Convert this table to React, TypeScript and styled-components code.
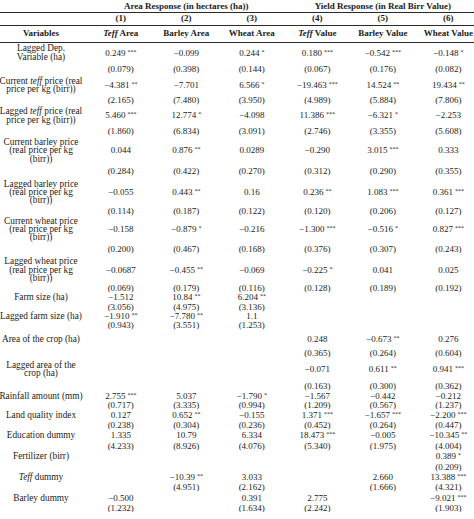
import * as React from 'react';
import styled, { createGlobalStyle } from 'styled-components';

const GlobalStyle = createGlobalStyle`
  html, body {
    margin: 0;
    padding: 0;
    background: #ffffff;
    overflow: hidden;
  }
`;

const LABEL_WIDTH = 94;
const DATA_WIDTH = 65.5;

const Page = styled.div`
  margin-left: -6px;
  width: ${LABEL_WIDTH + DATA_WIDTH * 6}px;
`;

const Table = styled.table`
  border-collapse: collapse;
  table-layout: fixed;
  width: 100%;
  font-family: 'Liberation Serif', 'Times New Roman', serif;
  font-size: 9px;
  line-height: 8.4px;
  color: #1b1b1b;
`;

const Row = styled.tr<{ $h: number; $rule?: boolean }>`
  height: ${(p) => p.$h}px;
  border-bottom: ${(p) => (p.$rule ? '1px solid #2a2a2a' : 'none')};
`;

const Cell = styled.td`
  padding: 0;
  text-align: center;
  vertical-align: middle;
  white-space: nowrap;
`;

const HeadCell = styled(Cell)`
  font-weight: bold;
`;

const LabelCell = styled(Cell)`
  font-size: 9.3px;
`;

const Em = styled.i`
  font-style: italic;
`;

const Stars = styled.sup`
  font-size: 6px;
  line-height: 0;
  vertical-align: 2px;
  margin-left: 2px;
`;

type Entry = {
  label: React.ReactNode;
  coef: string[];
  se: string[];
  h: [number, number];
};

const entries: Entry[] = [
  {
    label: (<>Lagged Dep.<br />Variable (ha)</>),
    coef: ['0.249 ***', '−0.099', '0.244 *', '0.180 ***', '−0.542 ***', '−0.148 *'],
    se: ['(0.079)', '(0.398)', '(0.144)', '(0.067)', '(0.176)', '(0.082)'],
    h: [21, 12],
  },
  {
    label: (<>Current <Em>teff</Em> price (real<br />price per kg (birr))</>),
    coef: ['−4.381 **', '−7.701', '6.566 *', '−19.463 ***', '14.524 **', '19.434 **'],
    se: ['(2.165)', '(7.480)', '(3.950)', '(4.989)', '(5.884)', '(7.806)'],
    h: [20, 11],
  },
  {
    label: (<>Lagged <Em>teff</Em> price (real<br />price per kg (birr))</>),
    coef: ['5.460 ***', '12.774 *', '−4.098', '11.386 ***', '−6.321 *', '−2.253'],
    se: ['(1.860)', '(6.834)', '(3.091)', '(2.746)', '(3.355)', '(5.608)'],
    h: [19, 13],
  },
  {
    label: (<>Current barley price<br />(real price per kg<br />(birr))</>),
    coef: ['0.044', '0.876 **', '0.0289', '−0.290', '3.015 ***', '0.333'],
    se: ['(0.284)', '(0.422)', '(0.270)', '(0.312)', '(0.290)', '(0.355)'],
    h: [25, 15],
  },
  {
    label: (<>Lagged barley price<br />(real price per kg<br />(birr))</>),
    coef: ['−0.055', '0.443 **', '0.16', '0.236 **', '1.083 ***', '0.361 ***'],
    se: ['(0.114)', '(0.187)', '(0.122)', '(0.120)', '(0.206)', '(0.127)'],
    h: [28, 10],
  },
  {
    label: (<>Current wheat price<br />(real price per kg<br />(birr))</>),
    coef: ['−0.158', '−0.879 *', '−0.216', '−1.300 ***', '−0.516 *', '0.827 ***'],
    se: ['(0.200)', '(0.467)', '(0.168)', '(0.376)', '(0.307)', '(0.243)'],
    h: [26, 14],
  },
  {
    label: (<>Lagged wheat price<br />(real price per kg<br />(birr))</>),
    coef: ['−0.0687', '−0.455 **', '−0.069', '−0.225 *', '0.041', '0.025'],
    se: ['(0.069)', '(0.179)', '(0.116)', '(0.128)', '(0.189)', '(0.192)'],
    h: [27, 9],
  },
  {
    label: 'Farm size (ha)',
    coef: ['−1.512', '10.84 **', '6.204 **', '', '', ''],
    se: ['(3.056)', '(4.975)', '(3.136)', '', '', ''],
    h: [10, 9],
  },
  {
    label: 'Lagged farm size (ha)',
    coef: ['−1.910 **', '−7.780 **', '1.1', '', '', ''],
    se: ['(0.943)', '(3.551)', '(1.253)', '', '', ''],
    h: [9, 9],
  },
  {
    label: 'Area of the crop (ha)',
    coef: ['', '', '', '0.248', '−0.673 **', '0.276'],
    se: ['', '', '', '(0.365)', '(0.264)', '(0.604)'],
    h: [19, 9],
  },
  {
    label: (<>Lagged area of the<br />crop (ha)</>),
    coef: ['', '', '', '−0.071', '0.611 **', '0.941 ***'],
    se: ['', '', '', '(0.163)', '(0.300)', '(0.362)'],
    h: [24, 10],
  },
  {
    label: 'Rainfall amount (mm)',
    coef: ['2.755 ***', '5.037', '−1.790 *', '−1.567', '−0.442', '−0.212'],
    se: ['(0.717)', '(3.335)', '(0.994)', '(1.209)', '(0.567)', '(1.237)'],
    h: [9, 9],
  },
  {
    label: 'Land quality index',
    coef: ['0.127', '0.652 **', '−0.155', '1.371 ***', '−1.657 ***', '−2.200 ***'],
    se: ['(0.238)', '(0.304)', '(0.236)', '(0.452)', '(0.264)', '(0.447)'],
    h: [11, 9],
  },
  {
    label: 'Education dummy',
    coef: ['1.335', '10.79', '6.334', '18.473 ***', '−0.005', '−10.345 **'],
    se: ['(4.233)', '(8.926)', '(4.076)', '(5.340)', '(1.975)', '(4.004)'],
    h: [12, 9],
  },
  {
    label: 'Fertilizer (birr)',
    coef: ['', '', '', '', '', '0.389 *'],
    se: ['', '', '', '', '', '(0.209)'],
    h: [12, 10],
  },
  {
    label: (<><Em>Teff</Em> dummy</>),
    coef: ['', '−10.39 **', '3.033', '', '2.660', '13.388 ***'],
    se: ['', '(4.951)', '(2.162)', '', '(1.666)', '(4.321)'],
    h: [10, 10],
  },
  {
    label: 'Barley dummy',
    coef: ['−0.500', '', '0.391', '2.775', '', '−9.021 ***'],
    se: ['(1.232)', '', '(1.634)', '(2.242)', '', '(1.903)'],
    h: [11, 9],
  },
];

const Value: React.FC<{ v: string }> = ({ v }) => {
  const [num, stars] = v.split(' ');
  return (
    <>
      {num}
      {stars && <Stars>{stars}</Stars>}
    </>
  );
};

export default function App() {
  return (
    <Page>
      <GlobalStyle />
      <Table>
        <colgroup>
          <col style={{ width: LABEL_WIDTH }} />
          {[0, 1, 2, 3, 4, 5].map((i) => (
            <col key={i} style={{ width: DATA_WIDTH }} />
          ))}
        </colgroup>
        <thead>
          <Row $h={12} $rule>
            <HeadCell />
            <HeadCell colSpan={3}>Area Response (in hectares (ha))</HeadCell>
            <HeadCell colSpan={3}>Yield Response (in Real Birr Value)</HeadCell>
          </Row>
          <Row $h={13} $rule>
            <HeadCell />
            {[1, 2, 3, 4, 5, 6].map((n) => (
              <HeadCell key={n}>({n})</HeadCell>
            ))}
          </Row>
          <Row $h={17} $rule>
            <HeadCell>Variables</HeadCell>
            <HeadCell><Em>Teff</Em> Area</HeadCell>
            <HeadCell>Barley Area</HeadCell>
            <HeadCell>Wheat Area</HeadCell>
            <HeadCell><Em>Teff</Em> Value</HeadCell>
            <HeadCell>Barley Value</HeadCell>
            <HeadCell>Wheat Value</HeadCell>
          </Row>
        </thead>
        <tbody>
          {entries.map((e, i) => (
            <React.Fragment key={i}>
              <Row $h={e.h[0]}>
                <LabelCell>{e.label}</LabelCell>
                {e.coef.map((v, j) => (
                  <Cell key={j}><Value v={v} /></Cell>
                ))}
              </Row>
              <Row $h={e.h[1]}>
                <LabelCell />
                {e.se.map((v, j) => (
                  <Cell key={j}>{v}</Cell>
                ))}
              </Row>
            </React.Fragment>
          ))}
        </tbody>
      </Table>
    </Page>
  );
}
